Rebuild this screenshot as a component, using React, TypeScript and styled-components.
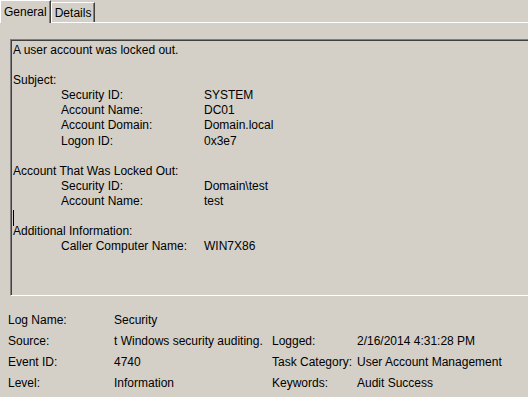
import styled, { createGlobalStyle } from "styled-components";

const GlobalStyle = createGlobalStyle`
    html, body {
        margin: 0;
        padding: 0;
        background: #d4d0c8;
        overflow: hidden;
    }
    body {
        font-family: "Liberation Sans", Arial, sans-serif;
        font-size: 12px;
        color: #000;
    }
`;

const Page = styled.div`
    width: 528px;
    height: 397px;
    background: #d4d0c8;
    display: flex;
    flex-direction: column;
    overflow: hidden;
`;

const TabStrip = styled.div`
    display: flex;
    align-items: flex-end;
    height: 22px;
    border-bottom: 1px solid #fff;
`;

const Tab = styled.div<{ $active?: boolean }>`
    height: ${(p) => (p.$active ? "23px" : "20px")};
    padding: ${(p) => (p.$active ? "0 3px 1px 3px" : "0 3px")};
    display: flex;
    align-items: center;
    border-left: 1px solid #fff;
    border-top: 1px solid #fff;
    border-right: 1px solid #404040;
    box-shadow: inset -1px 0 0 #808080;
    box-sizing: border-box;
    margin-bottom: ${(p) => (p.$active ? "-1px" : "0")};
    background: #d4d0c8;
    position: relative;
    z-index: ${(p) => (p.$active ? 1 : 0)};
`;

const Panel = styled.div`
    padding: 16px 0 0 10px;
`;

const MessageBox = styled.div`
    width: 560px;
    height: 257px;
    box-sizing: border-box;
    border-top: 1px solid #808080;
    border-left: 1px solid #808080;
    border-bottom: 1px solid #fff;
    box-shadow: inset 1px 1px 0 #404040;
    padding: 3px 0 0 2px;
    line-height: 15.1px;
`;

const Line = styled.div`
    height: 15.1px;
    white-space: nowrap;
`;

const Field = styled.div`
    display: flex;
    height: 15.1px;
    padding-left: 48px;
    white-space: nowrap;
`;

const FieldLabel = styled.span`
    width: 143px;
`;

const Caret = styled.span`
    display: inline-block;
    width: 1px;
    height: 16px;
    background: #000;
    margin-top: 1px;
`;

const Summary = styled.div`
    display: grid;
    grid-template-columns: 106px 158px 85px 1fr;
    grid-auto-rows: 21px;
    padding: 13px 0 0 8px;
    white-space: nowrap;
    align-items: center;
`;

const Cell = styled.span``;

const fields1 = [
    ["Security ID:", "SYSTEM"],
    ["Account Name:", "DC01"],
    ["Account Domain:", "Domain.local"],
    ["Logon ID:", "0x3e7"],
];

const fields2 = [
    ["Security ID:", "Domain\\test"],
    ["Account Name:", "test"],
];

export default function App() {
    return (
        <Page>
            <GlobalStyle />
            <TabStrip>
                <Tab $active>General</Tab>
                <Tab>Details</Tab>
            </TabStrip>
            <Panel>
                <MessageBox>
                    <Line>A user account was locked out.</Line>
                    <Line />
                    <Line>Subject:</Line>
                    {fields1.map(([k, v]) => (
                        <Field key={k}>
                            <FieldLabel>{k}</FieldLabel>
                            <span>{v}</span>
                        </Field>
                    ))}
                    <Line />
                    <Line>Account That Was Locked Out:</Line>
                    {fields2.map(([k, v]) => (
                        <Field key={k}>
                            <FieldLabel>{k}</FieldLabel>
                            <span>{v}</span>
                        </Field>
                    ))}
                    <Line>
                        <Caret />
                    </Line>
                    <Line>Additional Information:</Line>
                    <Field>
                        <FieldLabel>Caller Computer Name:</FieldLabel>
                        <span>WIN7X86</span>
                    </Field>
                </MessageBox>
            </Panel>
            <Summary>
                <Cell>Log Name:</Cell>
                <Cell>Security</Cell>
                <Cell />
                <Cell />
                <Cell>Source:</Cell>
                <Cell>t Windows security auditing.</Cell>
                <Cell>Logged:</Cell>
                <Cell>2/16/2014 4:31:28 PM</Cell>
                <Cell>Event ID:</Cell>
                <Cell>4740</Cell>
                <Cell>Task Category:</Cell>
                <Cell>User Account Management</Cell>
                <Cell>Level:</Cell>
                <Cell>Information</Cell>
                <Cell>Keywords:</Cell>
                <Cell>Audit Success</Cell>
            </Summary>
        </Page>
    );
}
